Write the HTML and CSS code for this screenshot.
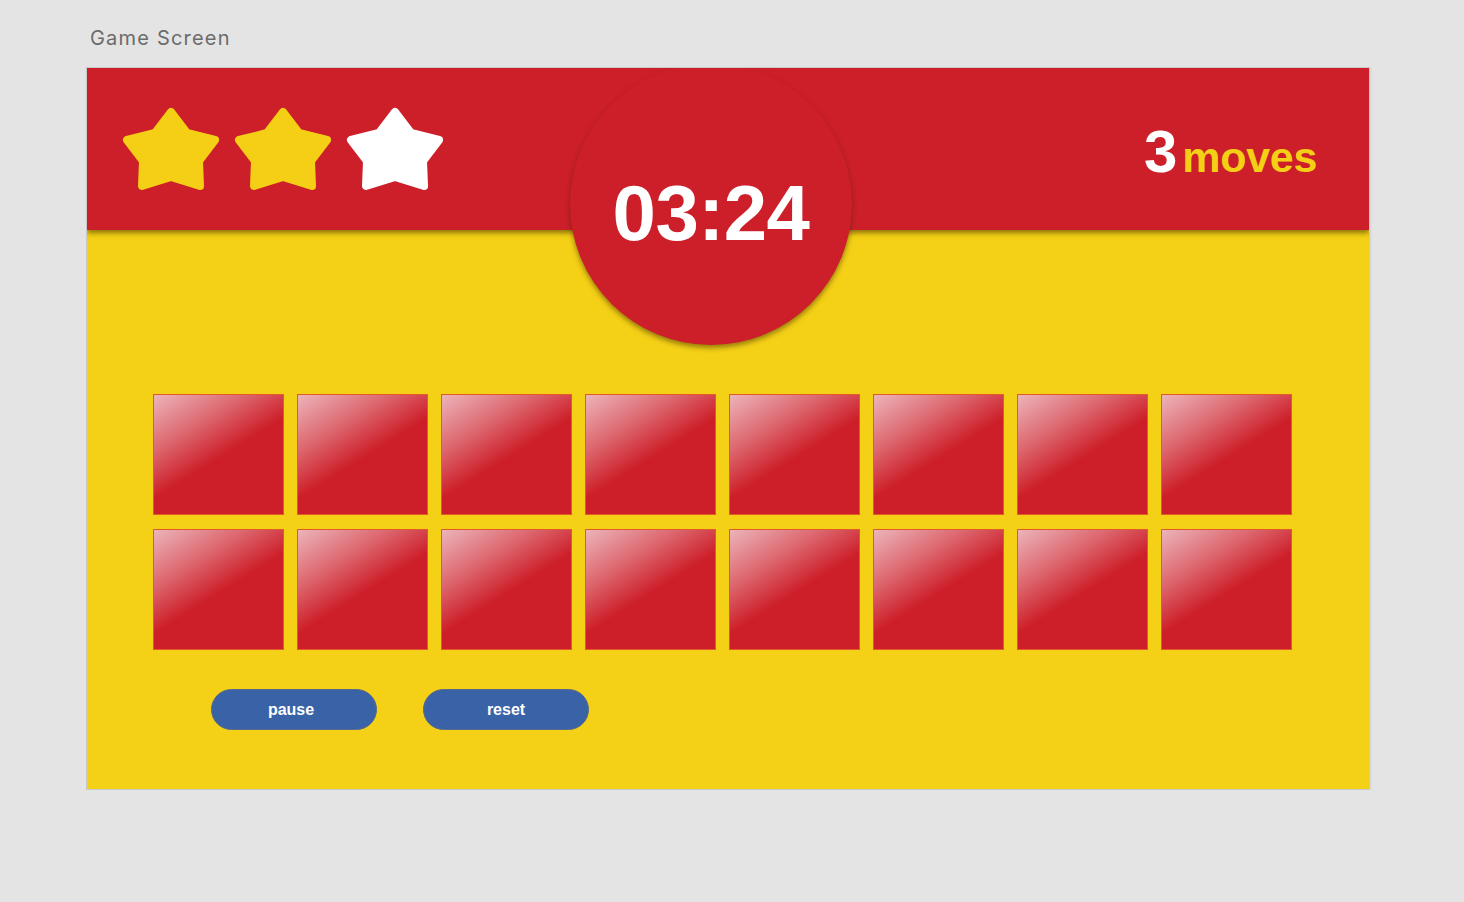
FILE: index.html
```html
<!DOCTYPE html>
<html lang="en">
<head>
<meta charset="utf-8">
<title>Game Screen</title>
<link rel="stylesheet" href="styles.css">
</head>
<body>
<div class="page">
  <div class="title">Game Screen</div>
  <div class="artboard">
    <header class="topbar">
      <div class="stars">
        <svg class="star" viewBox="0 0 98 84"><polygon class="fill-yellow" points="49,5 65,26 93,33 77,54 78,79 49,70 20,79 21,54 5,33 33,26"/></svg>
        <svg class="star" viewBox="0 0 98 84"><polygon class="fill-yellow" points="49,5 65,26 93,33 77,54 78,79 49,70 20,79 21,54 5,33 33,26"/></svg>
        <svg class="star" viewBox="0 0 98 84"><polygon class="fill-white" points="49,5 65,26 93,33 77,54 78,79 49,70 20,79 21,54 5,33 33,26"/></svg>
      </div>
      <div class="moves"><span class="moves-num">3</span><span class="moves-label">moves</span></div>
    </header>
    <div class="timer"><span class="timer-text">03:24</span></div>
    <main class="board">
      <div class="card"></div><div class="card"></div><div class="card"></div><div class="card"></div>
      <div class="card"></div><div class="card"></div><div class="card"></div><div class="card"></div>
      <div class="card"></div><div class="card"></div><div class="card"></div><div class="card"></div>
      <div class="card"></div><div class="card"></div><div class="card"></div><div class="card"></div>
    </main>
    <div class="controls">
      <button class="btn btn-pause">pause</button>
      <button class="btn">reset</button>
    </div>
  </div>
</div>
</body>
</html>
```

FILE: styles.css
```css
html, body {
  margin: 0;
  padding: 0;
  background: #e4e4e4;
}
.page {
  padding: 26px 0 0 86px;
}
.title {
  font-family: Inter, "Liberation Sans", sans-serif;
  font-size: 20px;
  line-height: 24px;
  letter-spacing: 1.2px;
  color: #6b6b6b;
  padding-left: 4px;
  margin-bottom: 17px;
}
.artboard {
  position: relative;
  width: 1282px;
  height: 721px;
  border: 1px solid #c9c9c9;
  box-shadow: 1px 1px 2px rgba(0,0,0,0.08);
  background: #f4d016;
  overflow: hidden;
  display: flex;
  flex-direction: column;
}
.topbar {
  position: relative;
  z-index: 1;
  height: 162px;
  flex: 0 0 auto;
  background: #cd1f29;
  box-shadow: 0 3px 5px rgba(60,40,0,0.55);
  display: flex;
  align-items: center;
  justify-content: space-between;
  padding: 0 52px 0 35px;
}
.stars {
  display: flex;
  gap: 14px;
}
.star {
  width: 98px;
  height: 84px;
  display: block;
}
.star polygon {
  stroke-width: 8;
  stroke-linejoin: round;
}
.fill-yellow { fill: #f4cf15; stroke: #f4cf15; }
.fill-white { fill: #ffffff; stroke: #ffffff; }
.moves {
  align-self: flex-start;
  padding-top: 54px;
  font-family: "Liberation Sans", Arial, sans-serif;
  font-weight: bold;
  display: flex;
  align-items: baseline;
  gap: 5px;
}
.moves-num {
  color: #ffffff;
  font-size: 60px;
  line-height: 60px;
}
.moves-label {
  color: #f4cf15;
  font-size: 43px;
  line-height: 60px;
  letter-spacing: -0.3px;
}
.timer {
  position: absolute;
  z-index: 2;
  left: 483px;
  top: -5px;
  width: 282px;
  height: 282px;
  border-radius: 50%;
  background: #cd1f29;
  box-shadow: 0 3px 5px rgba(60,40,0,0.5);
  display: flex;
  justify-content: center;
  align-items: center;
}
.timer-text {
  font-family: "Liberation Sans", Arial, sans-serif;
  font-weight: bold;
  font-size: 78px;
  line-height: 80px;
  letter-spacing: -0.5px;
  color: #ffffff;
  margin-top: 18px;
}
.board {
  margin: 164px 0 0 66px;
  display: grid;
  grid-template-columns: repeat(8, 131px);
  grid-auto-rows: 121px;
  column-gap: 13px;
  row-gap: 14px;
}
.card {
  box-sizing: border-box;
  border: 1px solid #e4592a;
  background: linear-gradient(148deg, #ecb4ba 0%, #dd6870 28%, #cd1f29 52%, #cd1f29 100%);
}
.controls {
  margin: 39px 0 0 124px;
  display: flex;
  gap: 46px;
}
.btn {
  width: 166px;
  height: 41px;
  border-radius: 21px;
  border: 1px solid #5a6a8a;
  background: #3a62a7;
  color: #ffffff;
  font-family: "Liberation Sans", Arial, sans-serif;
  font-weight: bold;
  font-size: 16px;
  padding: 0;
}
.btn-pause {
  padding-right: 6px;
}
```
